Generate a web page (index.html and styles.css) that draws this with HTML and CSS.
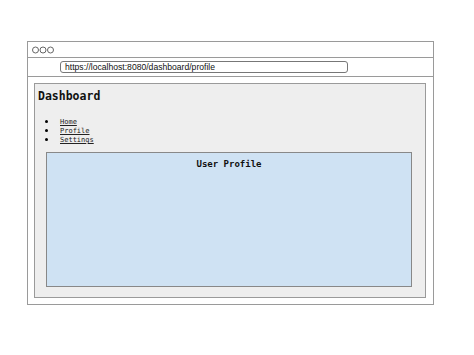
FILE: index.html
```html
<!DOCTYPE html>
<html>
<head>
<meta charset="utf-8">
<link rel="stylesheet" href="styles.css">
</head>
<body>
<div class="window">
  <div class="toolbar">
    <svg class="dots" width="22" height="8" viewBox="0 0 22 8">
      <circle cx="3.5" cy="4" r="3" fill="none" stroke="#555" stroke-width="0.9"/>
      <circle cx="11" cy="4" r="3" fill="none" stroke="#555" stroke-width="0.9"/>
      <circle cx="18.5" cy="4" r="3" fill="none" stroke="#555" stroke-width="0.9"/>
    </svg>
  </div>
  <div class="addressrow">
    <div class="address">https://localhost:8080/dashboard/profile</div>
  </div>
  <div class="content">
    <div class="panel">
      <h1 class="title">Dashboard</h1>
      <ul class="nav">
        <li><a href="#">Home</a></li>
        <li><a href="#">Profile</a></li>
        <li><a href="#">Settings</a></li>
      </ul>
      <div class="main">
        <h2 class="main-title">User Profile</h2>
      </div>
    </div>
  </div>
</div>
</body>
</html>
```
FILE: styles.css
```css
html, body {
  margin: 0;
  padding: 0;
  background: #ffffff;
}
body {
  padding: 41px 0 0 27px;
}
.window {
  box-sizing: border-box;
  width: 407px;
  height: 264px;
  border: 1px solid #9a9a9a;
  background: #ffffff;
  display: flex;
  flex-direction: column;
}
.toolbar {
  height: 15px;
  border-bottom: 1px solid #9a9a9a;
  display: flex;
  align-items: center;
  padding-left: 4px;
}
.dots {
  display: block;
}
.addressrow {
  height: 18px;
  border-bottom: 1px solid #9a9a9a;
  display: flex;
  align-items: center;
  padding-left: 32px;
}
.address {
  box-sizing: border-box;
  width: 288px;
  height: 12px;
  border: 1px solid #777;
  border-radius: 3px;
  font-family: "Liberation Sans", Arial, sans-serif;
  font-size: 8.6px;
  line-height: 10px;
  color: #111;
  padding-left: 4px;
  white-space: nowrap;
  overflow: hidden;
}
.content {
  flex: 1;
  padding: 6px 7px 6px 6px;
  display: flex;
}
.panel {
  box-sizing: border-box;
  flex: 1;
  background: #eeeeee;
  border: 1px solid #9a9a9a;
  padding: 5px 3px 10px 3px;
  display: flex;
  flex-direction: column;
}
.title {
  margin: 0;
  font-family: "DejaVu Sans Mono", monospace;
  font-weight: bold;
  font-size: 11.5px;
  line-height: 14px;
  color: #111;
}
.nav {
  margin: 14px 0 0 0;
  padding: 0 0 0 19px;
  font-family: "DejaVu Sans Mono", monospace;
  font-size: 7px;
  line-height: 9px;
  list-style: disc;
}
.nav li {
  padding-left: 3px;
  height: 9px;
}
.nav li::marker {
  font-size: 9px;
}
.nav a {
  color: #222;
  text-decoration: underline;
}
.main {
  margin: 8px 10px 0 8px;
  flex: 1;
  background: #cfe2f3;
  border: 1px solid #888;
  display: flex;
  flex-direction: column;
  align-items: center;
}
.main-title {
  margin: 5px 0 0 0;
  font-family: "DejaVu Sans Mono", monospace;
  font-weight: bold;
  font-size: 9px;
  line-height: 12px;
  color: #111;
}
```
